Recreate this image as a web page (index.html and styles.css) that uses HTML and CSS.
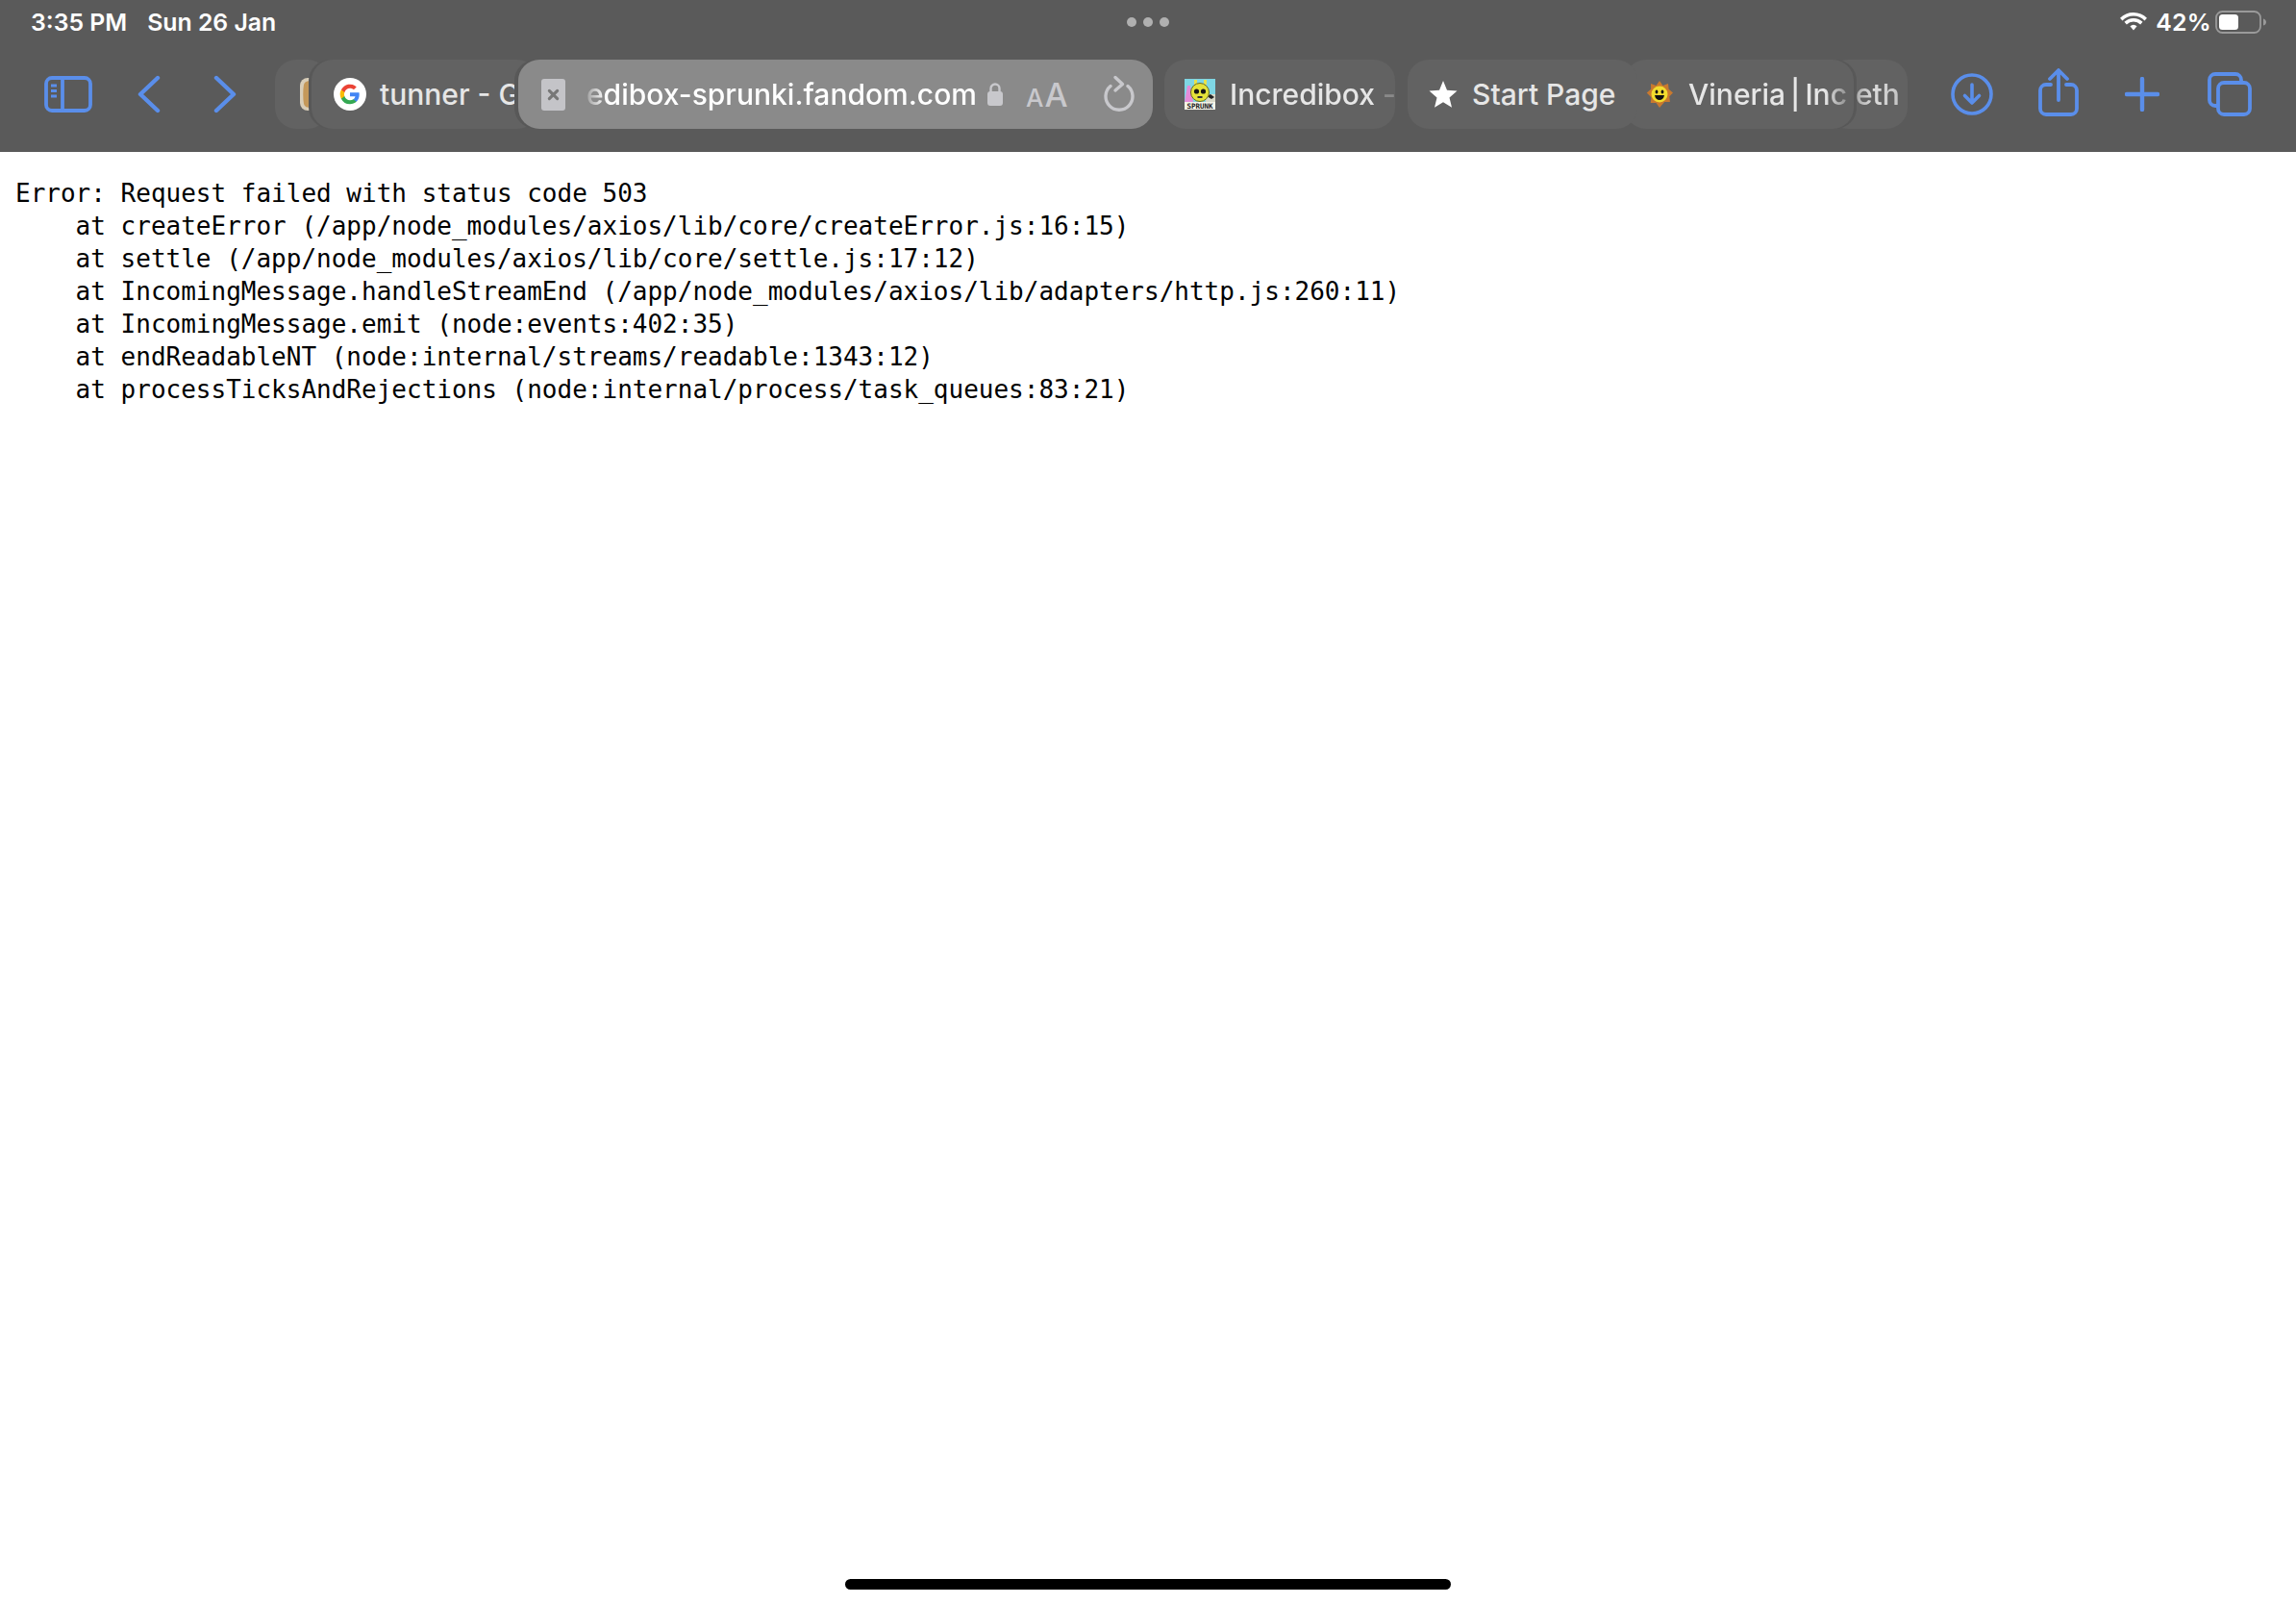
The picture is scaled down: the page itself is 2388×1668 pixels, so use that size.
FILE: index.html
```html
<!DOCTYPE html>
<html lang="en">
<head>
<meta charset="utf-8">
<title>Error</title>
<link rel="stylesheet" href="styles.css">
</head>
<body>
<header class="chrome">
  <div class="status">
    <div class="status-left"><span>3:35 PM</span><span>Sun 26 Jan</span></div>
    <div class="dots"><i></i><i></i><i></i></div>
    <div class="status-right">
      <svg class="wifi" viewBox="0 0 28 20"><path d="M14 17.500l-3.400-3.900a5.200 5.200 0 0 1 6.800 0zM14 5.600c3.600 0 6.800 1.400 9.100 3.700l-2.300 2.500A9.800 9.800 0 0 0 14 9a9.800 9.800 0 0 0-6.800 2.800L4.900 9.300A12.900 12.900 0 0 1 14 5.600zM14 0c5.100 0 9.900 2 13.300 5.500L25 8A15.600 15.600 0 0 0 14 3.400 15.600 15.600 0 0 0 3 8L.7 5.500A18.700 18.700 0 0 1 14 0z" fill="#fff"/></svg>
      <span class="pct">42%</span>
      <svg class="battery" viewBox="0 0 54 24"><rect x="1" y="1" width="46" height="22" rx="6.500" fill="none" stroke="#9a9a9a" stroke-width="1.800"/><rect x="4" y="4" width="20" height="16" rx="3.500" fill="#fff"/><path d="M50 8.500c2 .5 3 2 3 3.500s-1 3-3 3.500z" fill="#9a9a9a"/></svg>
    </div>
  </div>
  <div class="toolbar">
    <nav class="nav">
      <svg class="ic-sidebar" viewBox="0 0 50 38" fill="none" stroke="#5a8eea" stroke-width="3.800"><rect x="2" y="2" width="46" height="34" rx="6"/><path d="M19 2v34"/><path d="M7 10h6M7 15.500h6M7 21h6" stroke-width="2.800"/></svg>
      <svg class="ic-back" viewBox="0 0 24 40" fill="none" stroke="#5a8eea" stroke-width="4.400" stroke-linecap="round" stroke-linejoin="round"><path d="M21 3L3 20l18 17"/></svg>
      <svg class="ic-forward" viewBox="0 0 24 40" fill="none" stroke="#5a8eea" stroke-width="4.400" stroke-linecap="round" stroke-linejoin="round"><path d="M3 3l18 17L3 37"/></svg>
    </nav>
    <div class="strip">
      <div class="tab tab-first">
        <svg class="fav-sliver" viewBox="0 0 12 36"><rect x="0" y="1" width="24" height="34" rx="8" fill="#d8cdb8"/><path d="M4 8c1-3 3-4 8-4v28c-5 0-7-1-8-4-1-6-1-14 0-20z" fill="#c4985a"/></svg>
      </div>
      <div class="tab tab-google">
        <svg class="fav" viewBox="0 0 34 34"><circle cx="17" cy="17" r="17" fill="#fff"/><path d="M26.700 17.300c0-.7-.1-1.400-.2-2H17v3.900h5.500a4.700 4.700 0 0 1-2 3.100v2.500h3.200c1.900-1.800 3-4.400 3-7.500z" fill="#4285f4"/><path d="M17 27.200c2.700 0 5-.9 6.700-2.400l-3.200-2.500c-.9.600-2.100 1-3.500 1-2.700 0-4.900-1.800-5.700-4.200H7.900v2.600a10.100 10.100 0 0 0 9.100 5.500z" fill="#34a853"/><path d="M11.300 19.100a6 6 0 0 1 0-4.200v-2.600H7.900a10.100 10.100 0 0 0 0 9.400z" fill="#fbbc05"/><path d="M17 10.800c1.500 0 2.800.5 3.900 1.500l2.900-2.900A10 10 0 0 0 7.900 12.300l3.400 2.600c.8-2.400 3-4.100 5.700-4.100z" fill="#ea4335"/></svg>
        <span class="tab-title">tunner - G</span>
      </div>
      <div class="tab tab-active">
        <span class="close-box"><svg viewBox="0 0 24 24" fill="none" stroke="#777" stroke-width="3" stroke-linecap="round"><path d="M8 8l8 8M16 8l-8 8"/></svg></span>
        <span class="url">edibox-sprunki.fandom.com</span>
        <svg class="lock" viewBox="0 0 18 26"><path d="M4.500 11V7a4.500 4.500 0 0 1 9 0v4" fill="none" stroke="#c8c8cc" stroke-width="2.400"/><rect x="1" y="10" width="16" height="15" rx="3" fill="#c8c8cc"/></svg>
        <span class="aa"><small>A</small>A</span>
        <svg class="reload" viewBox="0 0 34 40" fill="none" stroke="#c8c8cc" stroke-width="3.400" stroke-linecap="round" stroke-linejoin="round"><path d="M9 11.500a14 14 0 1 0 18 0"/><path d="M14 2.500l7.500 7L14 16"/></svg>
      </div>
      <div class="tab tab-incredibox">
        <svg class="fav-square" viewBox="0 0 32 32">
          <rect width="32" height="32" fill="#7fd6e4"/>
          <path d="M0 24l3-17h3l3 17z" fill="#e58bd8"/>
          <rect x="22" y="16" width="10" height="8" fill="#d9d9c8"/>
          <path d="M23 18l4-2 4 3-3 2z" fill="#222"/>
          <rect x="10" y="1" width="3" height="5" fill="#e8e24a"/>
          <rect x="20" y="1" width="3" height="5" fill="#e8e24a"/>
          <circle cx="16" cy="14" r="9.500" fill="#e4e23a" stroke="#6a6a20" stroke-width="1"/>
          <circle cx="12.500" cy="13" r="2.600" fill="#161616"/>
          <circle cx="19.500" cy="13" r="2.600" fill="#161616"/>
          <rect x="13.500" y="18" width="5" height="2" fill="#333"/>
          <rect y="24" width="32" height="8" fill="#f4f4e8"/>
          <text x="16" y="31" class="fav-text" text-anchor="middle">SPRUNK</text>
        </svg>
        <span class="tab-title fade-end">Incredibox -</span>
      </div>
      <div class="tab tab-start">
        <svg class="star" viewBox="0 0 30 30"><path d="M15 1l4 9.800 10.500.8-8 6.900 2.500 10.300L15 23.300 6 28.800l2.500-10.300-8-6.900L11 10.800z" fill="#fff"/></svg>
        <span class="tab-title">Start Page</span>
      </div>
      <div class="tab tab-vineria">
        <svg class="fav-sun" viewBox="0 0 28 28">
          <path d="M14 0l3.500 5 5.500-2 .6 5.700 4.400 3.800-3.700 3.800.6 5.700-5.700-.1L14 28l-3.500-5.100-5.700.1.600-5.700L.7 12.500l4.400-3.800L5 3l5.500 2z" fill="#c9792e"/>
          <circle cx="14" cy="14" r="8.500" fill="#f2dc2e"/>
          <ellipse cx="11" cy="11.500" rx="1.400" ry="2" fill="#111"/>
          <ellipse cx="17" cy="11.500" rx="1.400" ry="2" fill="#111"/>
          <path d="M9 15h10c-.5 3.500-2.500 5-5 5s-4.500-1.500-5-5z" fill="#111"/>
        </svg>
        <span class="tab-title fade-vineria">Vineria | Inc</span>
      </div>
      <div class="tab tab-last"><span class="tab-title fade-both">eth</span></div>
    </div>
    <div class="actions">
      <svg class="ic-download" viewBox="0 0 44 44" fill="none" stroke="#5a8eea" stroke-width="3.600" stroke-linecap="round" stroke-linejoin="round"><circle cx="22" cy="22" r="20"/><path d="M22 12v19M14.500 23.500L22 31l7.500-7.500"/></svg>
      <svg class="ic-share" viewBox="0 0 42 50" fill="none" stroke="#5a8eea" stroke-width="3.800" stroke-linecap="round" stroke-linejoin="round"><path d="M13 17H8a6 6 0 0 0-6 6v19a6 6 0 0 0 6 6h26a6 6 0 0 0 6-6V23a6 6 0 0 0-6-6h-5"/><path d="M21 33V3M12 11l9-9 9 9"/></svg>
      <svg class="ic-plus" viewBox="0 0 36 36" fill="none" stroke="#5a8eea" stroke-width="4.400" stroke-linecap="round"><path d="M18 2v32M2 18h32"/></svg>
      <svg class="ic-tabs" viewBox="0 0 46 46" fill="none" stroke="#5a8eea" stroke-width="3.800" stroke-linejoin="round"><path d="M11 35H8a6 6 0 0 1-6-6V8a6 6 0 0 1 6-6h21a6 6 0 0 1 6 6v3"/><rect x="11" y="11" width="33" height="33" rx="6"/></svg>
    </div>
  </div>
</header>
<main class="page">
<pre class="trace">Error: Request failed with status code 503
    at createError (/app/node_modules/axios/lib/core/createError.js:16:15)
    at settle (/app/node_modules/axios/lib/core/settle.js:17:12)
    at IncomingMessage.handleStreamEnd (/app/node_modules/axios/lib/adapters/http.js:260:11)
    at IncomingMessage.emit (node:events:402:35)
    at endReadableNT (node:internal/streams/readable:1343:12)
    at processTicksAndRejections (node:internal/process/task_queues:83:21)</pre>
</main>
<footer class="home"><div class="home-bar"></div></footer>
</body>
</html>
```
FILE: styles.css
```css
* { box-sizing: border-box; }
html, body { margin: 0; height: 100%; }
body {
  width: 2388px;
  height: 1668px;
  display: flex;
  flex-direction: column;
  background: #fff;
  overflow: hidden;
  font-family: Inter, "Liberation Sans", sans-serif;
}
svg { display: block; flex: none; }

.chrome { height: 158px; flex: none; background: #5a5a5a; }

.status {
  height: 46px;
  padding: 0 30px 0 32px;
  display: grid;
  grid-template-columns: 1fr auto 1fr;
  align-items: center;
  color: #fff;
  font-size: 24.800px;
  font-weight: 600;
}
.status-left { display: flex; gap: 21px; }
.status-right { display: flex; align-items: center; justify-content: flex-end; }
.dots { display: flex; gap: 7px; margin-left: -3px; }
.dots i { width: 10px; height: 10px; border-radius: 50%; background: #b0b0b0; }
.wifi { width: 30px; height: 21px; margin-right: 8px; }
.pct { letter-spacing: .3px; margin-right: 4px; }
.battery { width: 54px; height: 24px; }

.toolbar { height: 112px; padding: 16px 0 24px 46px; display: flex; align-items: stretch; }

.nav { width: 240px; flex: none; display: flex; align-items: center; }
.ic-sidebar { width: 50px; height: 38px; margin-right: 47px; }
.ic-back { width: 24px; height: 40px; margin-right: 55px; }
.ic-forward { width: 24px; height: 40px; }

.strip { width: 1698px; flex: none; display: flex; }
.tab {
  height: 72px;
  flex: none;
  display: flex;
  align-items: center;
  position: relative;
  border-radius: 22px;
  background: #626262;
  color: #e6e6e6;
  font-size: 30px;
  font-weight: 500;
  white-space: nowrap;
  overflow: hidden;
}
.tab-title { display: block; }

.tab-first { width: 56px; padding-left: 26px; z-index: 1; }
.fav-sliver { width: 12px; height: 36px; }
.tab-google {
  width: 236px;
  margin-left: -18px;
  padding-left: 23px;
  z-index: 2;
  box-shadow: -3px 0 0 #585858;
  overflow: visible;
}
.fav { width: 34px; height: 34px; margin-right: 14px; }
.tab-active {
  width: 660px;
  margin-left: -21px;
  padding-left: 24px;
  z-index: 3;
  background: #8a8a8a;
  color: #fff;
  box-shadow: -4px 0 0 #585858;
}
.close-box {
  width: 25px;
  height: 33px;
  margin-right: 22px;
  border-radius: 3px;
  background: #c4c4c8;
  display: flex;
  align-items: center;
}
.close-box svg { width: 25px; height: 25px; }
.url {
  flex: none;
  -webkit-mask-image: linear-gradient(90deg, rgba(0,0,0,.2), #000 20px);
  mask-image: linear-gradient(90deg, rgba(0,0,0,.2), #000 20px);
}
.lock { width: 18px; height: 26px; margin-left: 10px; }
.aa {
  width: 46px;
  margin-left: 23px;
  color: #c8c8cc;
  font-size: 34px;
  font-weight: 500;
  letter-spacing: 1px;
  line-height: 1;
  padding-top: 2px;
}
.aa small { font-size: 26px; }
.reload { width: 34px; height: 40px; margin-left: 33px; }

.tab-incredibox { width: 240px; margin-left: 12px; padding-left: 21px; }
.fav-square { width: 32px; height: 32px; margin-right: 15px; }
.fav-text { font: 700 7.500px "DejaVu Sans Mono", monospace; fill: #222; }
.fade-end {
  -webkit-mask-image: linear-gradient(90deg, #000 88%, rgba(0,0,0,.3) 92%);
  mask-image: linear-gradient(90deg, #000 88%, rgba(0,0,0,.3) 92%);
}
.tab-start { width: 239px; margin-left: 13px; padding-left: 22px; z-index: 2; }
.star { width: 30px; height: 30px; margin-right: 15px; }
.tab-vineria {
  width: 238px;
  margin-left: -13px;
  padding-left: 22px;
  z-index: 1;
  box-shadow: 3px 0 0 #585858;
}
.fade-vineria {
  word-spacing: -3px;
  -webkit-mask-image: linear-gradient(90deg, #000 86%, rgba(0,0,0,.35));
  mask-image: linear-gradient(90deg, #000 86%, rgba(0,0,0,.35));
}
.fav-sun { width: 28px; height: 28px; margin-right: 16px; }
.tab-last {
  width: 84px;
  margin-left: -28px;
  padding-left: 30px;
  justify-content: flex-start;
  color: #dcdcdc;
}
.fade-both {
  -webkit-mask-image: linear-gradient(90deg, rgba(0,0,0,.6), #000 40%, rgba(0,0,0,.8));
  mask-image: linear-gradient(90deg, rgba(0,0,0,.6), #000 40%, rgba(0,0,0,.8));
}

.actions { flex: 1; display: flex; align-items: center; padding-left: 45px; }
.ic-download { width: 44px; height: 44px; margin-right: 47px; }
.ic-share { width: 42px; height: 50px; margin: -4px 48px 0 0; }
.ic-plus { width: 36px; height: 36px; margin-right: 50px; }
.ic-tabs { width: 46px; height: 46px; }

.page { flex: 1; padding: 26px 0 0 16px; }
.trace {
  margin: 0;
  color: #000;
  font: 26px/34px "DejaVu Sans Mono", monospace;
}

.home { height: 26px; flex: none; display: flex; justify-content: center; padding-bottom: 15px; }
.home-bar { width: 630px; height: 11px; border-radius: 6px; background: #000; }
```
